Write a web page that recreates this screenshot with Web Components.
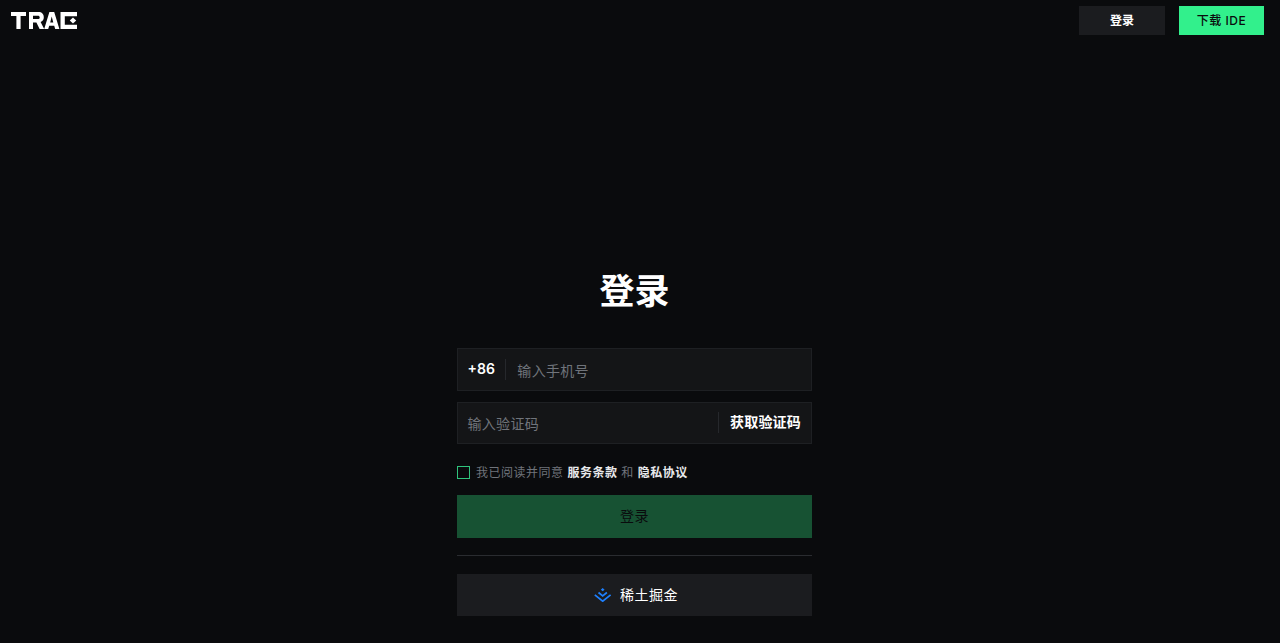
<!DOCTYPE html>
<html lang="zh">
<head>
<meta charset="utf-8">
<title>TRAE</title>
<style>
  html, body { margin: 0; height: 100%; background: #0a0b0d; overflow: hidden; }
  body { font-family: Inter, "Noto Sans CJK SC", sans-serif; }
</style>
</head>
<body>
<trae-header></trae-header>
<login-form></login-form>

<script>
const FONT = `Inter, "Noto Sans CJK SC", sans-serif`;

class TraeHeader extends HTMLElement {
  constructor() {
    super();
    this.attachShadow({ mode: 'open' }).innerHTML = `
      <style>
        :host { display: flex; align-items: flex-start; justify-content: space-between; height: 41px; padding: 6px 16px 0 11px; box-sizing: border-box; font-family: ${FONT}; }
        svg { display: block; margin-top: 6px; }
        .btns { display: flex; gap: 14px; }
        .btn { width: 85px; height: 29px; box-sizing: border-box; padding-bottom: 2px; display: flex; align-items: center; justify-content: center; font-size: 12px; font-weight: 500; }
        .dark { width: 86px; background: #1b1c1f; color: #fff; font-weight: 700; }
        .green { background: #32f08c; color: #0a0b0d; letter-spacing: .5px; }
      </style>
      <svg width="66" height="17" viewBox="0 0 66 17" fill="#fff" aria-label="TRAE">
        <path d="M0 0H15V4H9.6V17H5.4V4H0Z"/>
        <path fill-rule="evenodd" d="M18 0H27.4C30.9 0 32.8 2 32.8 5.2C32.8 7.6 31.6 9.3 29.6 9.9L33.2 17H28.6L25.4 10.4H22V17H18ZM22 3.8V6.9H26.8C28 6.9 28.7 6.4 28.7 5.4C28.7 4.4 28 3.8 26.8 3.8Z"/>
        <path fill-rule="evenodd" d="M38.4 0H43.2L48.4 17H44.2L43.2 13.7H38.2L37.2 17H33.2ZM40.7 4.6L39.2 10.5H42.3Z"/>
        <path d="M49.5 0H66V4.2H53.8V12.8H66V17H49.5Z"/>
        <path d="M62 5.4L65.2 8.5L62 11.6L58.8 8.5Z"/>
      </svg>
      <div class="btns">
        <div class="btn dark">登录</div>
        <div class="btn green">下载 IDE</div>
      </div>`;
  }
}

class TextField extends HTMLElement {
  constructor() {
    super();
    this.attachShadow({ mode: 'open' }).innerHTML = `
      <style>
        :host { display: flex; align-items: center; height: 42.6px; box-sizing: border-box; background: #141517; border: 1px solid #1e2023; font-family: ${FONT}; font-size: 14px; letter-spacing: .3px; color: #70747b; }
        .ph { flex: 1; padding-left: 9.5px; padding-top: 1px; }
        :host([addon-first]) .ph { padding-left: 10px; }
      </style>
      <slot name="before"></slot>
      <div class="ph"><slot></slot></div>
      <slot name="after"></slot>`;
  }
}

class FieldAddon extends HTMLElement {
  constructor() {
    super();
    this.attachShadow({ mode: 'open' }).innerHTML = `
      <style>
        :host { display: flex; flex: none; align-items: center; height: 21px; box-sizing: border-box; padding-bottom: 3px; color: #fff; font-weight: 600; font-size: 14px; }
        :host([side=left]) { border-right: 1px solid #26282c; padding-left: 9.5px; padding-right: 10.5px; padding-bottom: 1px; margin-right: 1px; letter-spacing: 0; }
        :host([side=right]) { border-left: 1px solid #26282c; padding-left: 11px; padding-right: 10px; letter-spacing: .2px; }
      </style>
      <slot></slot>`;
  }
}

class AgreeRow extends HTMLElement {
  constructor() {
    super();
    this.attachShadow({ mode: 'open' }).innerHTML = `
      <style>
        :host { display: flex; align-items: center; gap: 6px; height: 17px; font-size: 12px; letter-spacing: .5px; color: #70747b; font-family: ${FONT}; }
        .box { width: 13px; height: 13px; box-sizing: border-box; border: 1px solid #2fc47c; flex: none; }
        .txt { padding-bottom: 1px; }
        b { color: #e8e9eb; font-weight: 600; }
      </style>
      <span class="box"></span>
      <span class="txt">我已阅读并同意 <b>服务条款</b> 和 <b>隐私协议</b></span>`;
  }
}

class WideButton extends HTMLElement {
  constructor() {
    super();
    this.attachShadow({ mode: 'open' }).innerHTML = `
      <style>
        :host { display: flex; align-items: center; justify-content: center; gap: 8px; height: 42.6px; box-sizing: border-box; padding-bottom: 2px; font-family: ${FONT}; font-size: 14px; letter-spacing: .5px; background: #1b1c1f; color: #fff; }
        :host([primary]) { background: #175233; color: #0a0b0d; }
        ::slotted(svg) { display: block; margin: 2px 0 0 3px; }
      </style>
      <slot></slot>`;
  }
}

class LoginForm extends HTMLElement {
  constructor() {
    super();
    this.attachShadow({ mode: 'open' }).innerHTML = `
      <style>
        :host { display: flex; justify-content: center; padding: 224px 11px 0 0; font-family: ${FONT}; }
        .wrap { width: 355px; display: flex; flex-direction: column; }
        h1 { margin: 0 0 31px; height: 52px; line-height: 52px; text-align: center; font-size: 35px; font-weight: 700; color: #fff; }
        text-field + text-field { margin-top: 11px; }
        agree-row { margin-top: 19.8px; }
        wide-button[primary] { margin-top: 14px; }
        wide-button:last-child { height: 42px; }
        hr { width: 100%; margin: 17.4px 0 18px; border: 0; height: 1px; background: #2a2c30; }
      </style>
      <div class="wrap">
        <h1>登录</h1>
        <text-field addon-first>
          <field-addon slot="before" side="left">+86</field-addon>
          输入手机号
        </text-field>
        <text-field>
          输入验证码
          <field-addon slot="after" side="right">获取验证码</field-addon>
        </text-field>
        <agree-row></agree-row>
        <wide-button primary>登录</wide-button>
        <hr>
        <wide-button>
          <svg width="18" height="14" viewBox="0 0 18 14" fill="none" stroke="#1e80ff" stroke-width="1.7">
            <path d="M8.7 .1L10.6 1.7L8.7 3.3L6.8 1.7Z" fill="#1e80ff" stroke="none"/>
            <path d="M4.5 4.5L8.7 8L12.9 4.5"/>
            <path d="M.8 6.8L8.7 13.2L16.6 6.8"/>
          </svg>
          <span>稀土掘金</span>
        </wide-button>
      </div>`;
  }
}

customElements.define('trae-header', TraeHeader);
customElements.define('text-field', TextField);
customElements.define('field-addon', FieldAddon);
customElements.define('agree-row', AgreeRow);
customElements.define('wide-button', WideButton);
customElements.define('login-form', LoginForm);
</script>
</body>
</html>
